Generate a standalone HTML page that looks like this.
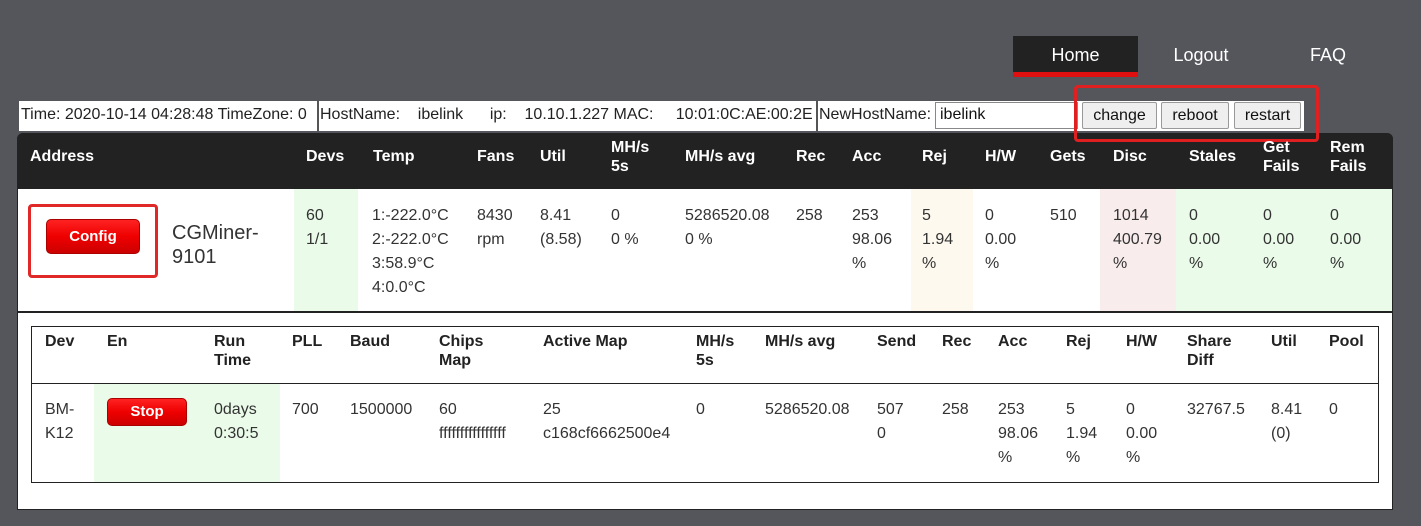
<!DOCTYPE html>
<html><head><meta charset="utf-8"><style>
*{margin:0;padding:0;box-sizing:border-box}
body{width:1421px;height:526px;overflow:hidden;background:#55565b;font-family:"Liberation Sans",sans-serif;position:relative;color:#333}
.a{position:absolute;white-space:nowrap}
.h{color:#fff;font-weight:bold;font-size:16px;line-height:19px}
.d{font-size:16px;line-height:24px;color:#333}
.ih{color:#222;font-weight:bold;font-size:16px;line-height:19px}
.btn{position:absolute;background:#efefef;border:1px solid #999;border-radius:2px;font-size:16px;text-align:center;line-height:25px;color:#111}
.red{position:absolute;background:linear-gradient(#f22 0%,#e00 50%,#c00 100%);border:1px solid #a00;border-radius:5px;color:#fff;font-weight:bold;font-size:15px;text-align:center}
</style></head><body>
<!-- nav -->
<div class="a" style="left:1013px;top:36px;width:125px;height:36px;background:#222"></div>
<div class="a" style="left:1013px;top:72px;width:125px;height:5px;background:#e01010"></div>
<div class="a" style="left:1013px;top:45px;width:125px;text-align:center;color:#fff;font-size:18px">Home</div>
<div class="a" style="left:1150px;top:45px;width:102px;text-align:center;color:#fff;font-size:18px">Logout</div>
<div class="a" style="left:1290px;top:45px;width:76px;text-align:center;color:#fff;font-size:18px">FAQ</div>
<!-- info bar -->
<div class="a" style="left:19px;top:101px;width:1285px;height:30px;background:#fff"></div>
<div class="a" style="left:317px;top:101px;width:2px;height:30px;background:#555"></div>
<div class="a" style="left:816px;top:101px;width:2px;height:30px;background:#555"></div>
<div class="a" style="left:21px;top:106px;font-size:16px;color:#222">Time: 2020-10-14 04:28:48 TimeZone: 0</div>
<div class="a" style="left:320px;top:106px;font-size:16px;color:#222">HostName:&nbsp;&nbsp;&nbsp; ibelink&nbsp;&nbsp;&nbsp;&nbsp;&nbsp; ip:&nbsp;&nbsp;&nbsp; 10.10.1.227 MAC:&nbsp;&nbsp;&nbsp;&nbsp; 10:01:0C:AE:00:2E</div>
<div class="a" style="left:819px;top:106px;font-size:16px;color:#222">NewHostName:</div>
<div class="a" style="left:935px;top:102px;width:143px;height:27px;border:1px solid #888;background:#fff;font-size:16px;padding:3px 4px;color:#111">ibelink</div>
<div class="btn" style="left:1082px;top:102px;width:75px;height:27px">change</div>
<div class="btn" style="left:1161px;top:102px;width:68px;height:27px">reboot</div>
<div class="btn" style="left:1234px;top:102px;width:67px;height:27px">restart</div>
<!-- main panel -->
<div class="a" style="left:17px;top:133px;width:1376px;height:377px;background:#fff;border:1px solid #222;border-radius:6px 6px 0 0"></div>
<div class="a" style="left:17px;top:133px;width:1376px;height:56px;background:#222;border-radius:6px 6px 0 0"></div>
<div class="a" style="left:294px;top:189px;width:64px;height:122px;background:#eafbe9"></div>
<div class="a" style="left:911px;top:189px;width:62px;height:122px;background:#fdf9ee"></div>
<div class="a" style="left:1100px;top:189px;width:76px;height:122px;background:#f9ecec"></div>
<div class="a" style="left:1176px;top:189px;width:216px;height:122px;background:#eafbe9"></div>
<div class="a" style="left:17px;top:311px;width:1376px;height:2px;background:#222"></div>
<div class="a" style="left:1074px;top:85px;width:245px;height:57px;border:3px solid #e02020;border-radius:4px"></div>
<div class="a h" style="left:30px;top:147px">Address</div>
<div class="a h" style="left:306px;top:147px">Devs</div>
<div class="a h" style="left:373px;top:147px">Temp</div>
<div class="a h" style="left:477px;top:147px">Fans</div>
<div class="a h" style="left:540px;top:147px">Util</div>
<div class="a h" style="left:611px;top:138px">MH/s<br>5s</div>
<div class="a h" style="left:685px;top:147px">MH/s avg</div>
<div class="a h" style="left:796px;top:147px">Rec</div>
<div class="a h" style="left:852px;top:147px">Acc</div>
<div class="a h" style="left:922px;top:147px">Rej</div>
<div class="a h" style="left:985px;top:147px">H/W</div>
<div class="a h" style="left:1050px;top:147px">Gets</div>
<div class="a h" style="left:1113px;top:147px">Disc</div>
<div class="a h" style="left:1189px;top:147px">Stales</div>
<div class="a h" style="left:1263px;top:138px">Get<br>Fails</div>
<div class="a h" style="left:1330px;top:138px">Rem<br>Fails</div>
<div class="a" style="left:28px;top:204px;width:130px;height:74px;border:3px solid #e02828;border-radius:4px"></div>
<div class="red" style="left:46px;top:219px;width:94px;height:35px;line-height:33px">Config</div>
<div class="a" style="left:172px;top:221px;font-size:20px;line-height:24px;color:#333">CGMiner-<br>9101</div>
<div class="a d" style="left:306px;top:204px">60<br>1/1</div>
<div class="a d" style="left:372px;top:204px">1:-222.0°C<br>2:-222.0°C<br>3:58.9°C<br>4:0.0°C</div>
<div class="a d" style="left:477px;top:204px">8430<br>rpm</div>
<div class="a d" style="left:540px;top:204px">8.41<br>(8.58)</div>
<div class="a d" style="left:611px;top:204px">0<br>0 %</div>
<div class="a d" style="left:685px;top:204px">5286520.08<br>0 %</div>
<div class="a d" style="left:796px;top:204px">258</div>
<div class="a d" style="left:852px;top:204px">253<br>98.06<br>%</div>
<div class="a d" style="left:922px;top:204px">5<br>1.94<br>%</div>
<div class="a d" style="left:985px;top:204px">0<br>0.00<br>%</div>
<div class="a d" style="left:1050px;top:204px">510</div>
<div class="a d" style="left:1113px;top:204px">1014<br>400.79<br>%</div>
<div class="a d" style="left:1189px;top:204px">0<br>0.00<br>%</div>
<div class="a d" style="left:1263px;top:204px">0<br>0.00<br>%</div>
<div class="a d" style="left:1330px;top:204px">0<br>0.00<br>%</div>
<!-- inner table -->
<div class="a" style="left:94px;top:384px;width:186px;height:98px;background:#eafbe9"></div>
<div class="a" style="left:31px;top:326px;width:1348px;height:157px;border:1px solid #222"></div>
<div class="a" style="left:31px;top:383px;width:1348px;height:1px;background:#222"></div>
<div class="a ih" style="left:45px;top:332px">Dev</div>
<div class="a ih" style="left:107px;top:332px">En</div>
<div class="a ih" style="left:214px;top:332px">Run<br>Time</div>
<div class="a ih" style="left:292px;top:332px">PLL</div>
<div class="a ih" style="left:350px;top:332px">Baud</div>
<div class="a ih" style="left:439px;top:332px">Chips<br>Map</div>
<div class="a ih" style="left:543px;top:332px">Active Map</div>
<div class="a ih" style="left:696px;top:332px">MH/s<br>5s</div>
<div class="a ih" style="left:765px;top:332px">MH/s avg</div>
<div class="a ih" style="left:877px;top:332px">Send</div>
<div class="a ih" style="left:942px;top:332px">Rec</div>
<div class="a ih" style="left:998px;top:332px">Acc</div>
<div class="a ih" style="left:1066px;top:332px">Rej</div>
<div class="a ih" style="left:1126px;top:332px">H/W</div>
<div class="a ih" style="left:1187px;top:332px">Share<br>Diff</div>
<div class="a ih" style="left:1271px;top:332px">Util</div>
<div class="a ih" style="left:1329px;top:332px">Pool</div>
<div class="a d" style="left:45px;top:398px">BM-<br>K12</div>
<div class="red" style="left:107px;top:398px;width:80px;height:28px;line-height:26px">Stop</div>
<div class="a d" style="left:214px;top:398px">0days<br>0:30:5</div>
<div class="a d" style="left:292px;top:398px">700</div>
<div class="a d" style="left:350px;top:398px">1500000</div>
<div class="a d" style="left:439px;top:398px">60<br>ffffffffffffffff</div>
<div class="a d" style="left:543px;top:398px">25<br>c168cf6662500e4</div>
<div class="a d" style="left:696px;top:398px">0</div>
<div class="a d" style="left:765px;top:398px">5286520.08</div>
<div class="a d" style="left:877px;top:398px">507<br>0</div>
<div class="a d" style="left:942px;top:398px">258</div>
<div class="a d" style="left:998px;top:398px">253<br>98.06<br>%</div>
<div class="a d" style="left:1066px;top:398px">5<br>1.94<br>%</div>
<div class="a d" style="left:1126px;top:398px">0<br>0.00<br>%</div>
<div class="a d" style="left:1187px;top:398px">32767.5</div>
<div class="a d" style="left:1271px;top:398px">8.41<br>(0)</div>
<div class="a d" style="left:1329px;top:398px">0</div>
</body></html>
